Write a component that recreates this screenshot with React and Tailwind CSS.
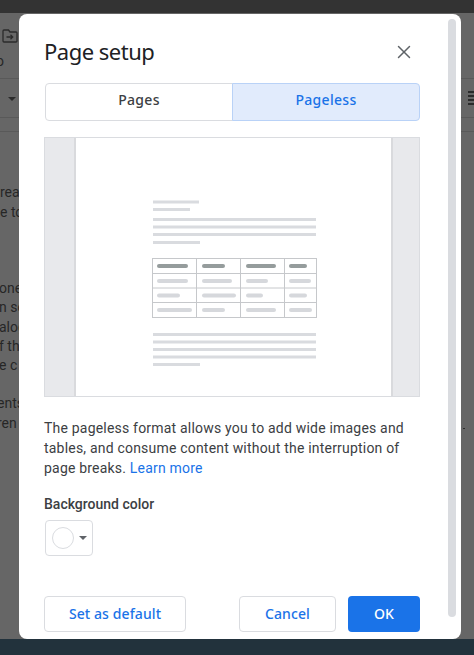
import React from 'react';
import { X } from 'lucide-react';

const roboto = 'font-["Roboto",sans-serif]';
const headingFont = 'font-["Noto_Sans",sans-serif]';

const introLines = [
  [153, 199, 202],
  [153, 190, 209.5],
  [153, 316, 219.5],
  [153, 316, 227],
  [153, 316, 234.5],
  [153, 200, 242.5],
];

const outroLines = [
  [153, 316, 334.5],
  [153, 316, 342],
  [153, 316, 349.5],
  [153, 316, 357],
  [153, 200, 364.5],
];

const tableRows = [
  { y: 266, dark: true, cells: [[157, 188], [202, 225], [246, 276], [289, 307]] },
  { y: 281, cells: [[157, 188], [202, 232], [246, 268], [289, 311]] },
  { y: 295.5, cells: [[157, 180], [202, 236], [246, 263], [289, 307]] },
  { y: 310, cells: [[157, 192], [202, 225], [246, 276], [289, 312]] },
];

function PagePreview() {
  return (
    <svg width="315" height="258" viewBox="76 138 315 258" className="block">
      <defs>
        <filter id="soft">
          <feGaussianBlur stdDeviation="0.6" />
        </filter>
      </defs>
      <g filter="url(#soft)">
        {[...introLines, ...outroLines].map(([x1, x2, y]) => (
          <rect key={`${x1}-${x2}-${y}`} x={x1} y={y - 1.5} width={x2 - x1} height="3" fill="#d9dbdf" />
        ))}
        <g stroke="#c6c8cb" strokeWidth="1" fill="none">
          <rect x="152.5" y="258.5" width="164" height="59" />
          <path d="M196.5 258.5V317.5M240.5 258.5V317.5M284.5 258.5V317.5M152.5 273.5H316.5M152.5 288H316.5M152.5 302.5H316.5" />
        </g>
        {tableRows.map((row) =>
          row.cells.map(([x1, x2]) => (
            <rect
              key={`${row.y}-${x1}`}
              x={x1}
              y={row.y - 2}
              width={x2 - x1}
              height="4"
              rx="2"
              fill={row.dark ? '#959c9c' : '#d6d8dc'}
            />
          ))
        )}
      </g>
    </svg>
  );
}

function ToolbarRows({ children }) {
  return (
    <div className="border-t border-[#595959]">
      <div className="flex h-[39px] border-b border-[#595959]">{children}</div>
      <div className="h-[14px] border-b border-[#595959]" />
    </div>
  );
}

function LeftBackdrop() {
  return (
    <div className={`w-[19px] shrink-0 overflow-hidden text-[14px] text-[#262626] ${roboto}`}>
      <div className="h-[33px] pl-[2px] pt-[16px]">
        <svg width="16" height="14" viewBox="0 0 16 14" fill="none" stroke="#2b2b2b" strokeWidth="1.3">
          <path d="M1 2V12a1 1 0 0 0 1 1h12a1 1 0 0 0 1-1V4a1 1 0 0 0-1-1H8L6.5 1H2a1 1 0 0 0-1 1z" />
          <path d="M4.5 8h6M8.5 5.8 10.7 8 8.5 10.2" />
        </svg>
      </div>
      <div className="flex h-[32px] justify-end pr-[15px] pt-[6px] leading-[19px]">o</div>
      <ToolbarRows>
        <div className="ml-[8px] mt-[18px] h-0 w-0 border-x-[4px] border-t-[4px] border-x-transparent border-t-[#2b2b2b]" />
      </ToolbarRows>
      <div className="mt-[51px] whitespace-nowrap leading-[19.5px]">
        <div>rea</div>
        <div>e to</div>
      </div>
      <div className="ml-[-1px] mt-[57px] whitespace-nowrap leading-[19.3px]">
        <div>one</div>
        <div>n sc</div>
        <div>alog</div>
        <div>f the</div>
        <div>e c</div>
      </div>
      <div className="ml-[-3px] mt-[19px] whitespace-nowrap leading-[19.5px]">
        <div>ents</div>
        <div>ren</div>
      </div>
    </div>
  );
}

function RightBackdrop() {
  return (
    <div className="w-[13px] shrink-0 overflow-hidden">
      <div className="h-[65px]" />
      <ToolbarRows>
        <div className="flex w-full flex-col justify-center gap-[2px] pl-[7px]">
          <div className="h-[2px] bg-[#2b2b2b]" />
          <div className="h-[2px] bg-[#2b2b2b]" />
          <div className="h-[2px] bg-[#2b2b2b]" />
          <div className="h-[2px] bg-[#2b2b2b]" />
        </div>
      </ToolbarRows>
      <div className="ml-[2px] mt-[296px] h-[1px] w-[2px] bg-[#2b2b2b]" />
    </div>
  );
}

export default function App() {
  return (
    <div className="flex h-[655px] w-[474px] flex-col overflow-hidden bg-[#666666]">
      <div className="h-[13px] shrink-0 bg-[#333333]" />
      <div className="flex h-[626px] shrink-0">
        <LeftBackdrop />
        <div className="mt-[1px] flex h-[625px] w-[442px] shrink-0 rounded-[8px] bg-white">
          <div className="flex w-[429px] shrink-0 flex-col pl-[25px] pr-[28px]">
            <div className="flex h-[76px] shrink-0 items-center justify-between">
              <h1 className={`mb-[2px] text-[22px] leading-[28px] font-normal tracking-[-0.5px] text-[#202124] ${headingFont}`}>Page setup</h1>
              <X size={22} strokeWidth={1.6} className="mr-[5px] text-[#5f6368]" />
            </div>

            <div className={`ml-[1px] mt-[-7px] flex h-[38px] shrink-0 text-[14px] font-medium tracking-[0.3px] ${headingFont}`}>
              <button className="h-full w-[188px] rounded-l-[4px] border border-[#dadce0] pb-[6px] text-[#3c4043]">Pages</button>
              <button className="ml-[-1px] h-full w-[188px] rounded-r-[4px] border border-[#b9d2f7] bg-[#e1ebfc] pb-[6px] text-[#1a73e8]">Pageless</button>
            </div>

            <div className="mt-[16px] h-[260px] w-[376px] shrink-0 border border-[#dadce0] bg-[#e8e9ec]">
              <div className="ml-[29px] w-[319px] border-x-2 border-[#d9dadd] bg-white">
                <PagePreview />
              </div>
            </div>

            <p className={`mt-[21px] text-[14px] leading-[20px] tracking-[0.2px] text-[#3c4043] ${roboto}`}>
              The pageless format allows you to add wide images and tables, and consume content without the interruption of page breaks. <a className="text-[#1a73e8]">Learn more</a>
            </p>

            <div className={`mt-[16px] text-[14px] leading-[20px] font-medium text-[#3c4043] ${roboto}`}>Background color</div>

            <button className="ml-[1px] mt-[6px] flex h-[36px] w-[48px] shrink-0 items-center rounded-[4px] border border-[#dadce0] pl-[6px]">
              <span className="h-[22px] w-[22px] rounded-full border border-[#dadce0] bg-white" />
              <span className="ml-[5px] h-0 w-0 border-x-[4px] border-t-[4px] border-x-transparent border-t-[#5f6368]" />
            </button>

            <div className={`mt-[40px] flex h-[36px] shrink-0 justify-between text-[14px] font-medium tracking-[0.1px] ${headingFont}`}>
              <button className="w-[142px] rounded-[4px] border border-[#dadce0] pb-[2px] text-[#1a73e8]">Set as default</button>
              <div className="flex gap-[12px]">
                <button className="w-[97px] rounded-[4px] border border-[#dadce0] pb-[2px] text-[#1a73e8]">Cancel</button>
                <button className="w-[72px] rounded-[4px] bg-[#1a73e8] pb-[2px] text-white">OK</button>
              </div>
            </div>
          </div>
          <div className="mt-[5px] h-[598px] w-[8px] rounded-full bg-[#dadce0]" />
        </div>
        <RightBackdrop />
      </div>
      <div className="h-[16px] shrink-0 bg-[#22323c]" />
    </div>
  );
}
